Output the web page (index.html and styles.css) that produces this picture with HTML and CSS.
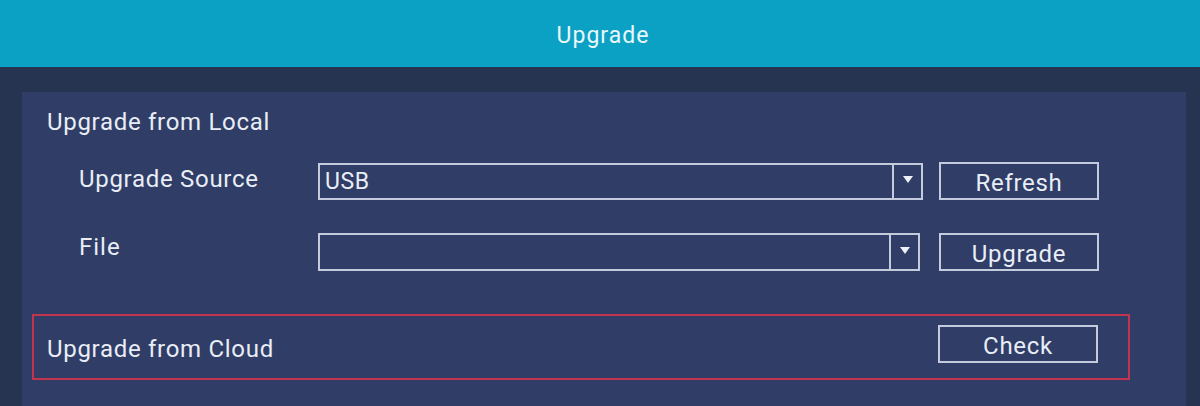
FILE: index.html
```html
<!DOCTYPE html>
<html>
<head>
<meta charset="utf-8">
<link rel="stylesheet" href="styles.css">
</head>
<body>
<div class="header">Upgrade</div>
<div class="panel">
  <div class="section-title">Upgrade from Local</div>
  <div class="row row-source">
    <div class="label">Upgrade Source</div>
    <div class="select sel1">
      <div class="select-value">USB</div>
      <div class="select-arrow"><span class="tri"></span></div>
    </div>
    <div class="btn">Refresh</div>
  </div>
  <div class="row row-file">
    <div class="label label-file">File</div>
    <div class="select sel2">
      <div class="select-value"></div>
      <div class="select-arrow"><span class="tri"></span></div>
    </div>
    <div class="btn">Upgrade</div>
  </div>
  <div class="cloud">
    <div class="cloud-title">Upgrade from Cloud</div>
    <div class="btn btn-check">Check</div>
  </div>
</div>
</body>
</html>
```
FILE: styles.css
```css
html, body {
  margin: 0;
  padding: 0;
}
body {
  width: 1200px;
  height: 406px;
  overflow: hidden;
  background: #263451;
  font-family: Roboto, "Liberation Sans", sans-serif;
  font-size: 24px;
  letter-spacing: 0.7px;
  color: #e9edf5;
}
.header {
  height: 67px;
  background: #0aa1c5;
  display: flex;
  align-items: center;
  justify-content: center;
  color: #eaf7fb;
  padding: 4px 0 0 6px;
  box-sizing: border-box;
  font-size: 23px;
  letter-spacing: 1px;
}
.panel {
  margin: 25px 14px 0 22px;
  height: 314px;
  background: #2f3d67;
  display: flex;
  flex-direction: column;
}
.section-title {
  margin-top: 16px;
  padding-left: 25px;
  line-height: 28px;
}
.row {
  display: flex;
  align-items: center;
  padding-left: 57px;
}
.row-source {
  margin-top: 26px;
}
.row-file {
  margin-top: 33px;
}
.label {
  width: 239px;
  margin-top: -5px;
}
.label-file {
  margin-top: -11px;
  letter-spacing: 1px;
}
.select {
  height: 37px;
  box-sizing: border-box;
  border: 2px solid #c3cbdc;
  display: flex;
}
.sel1 { width: 605px; }
.sel2 { width: 602px; height: 38px; }
.select-value {
  flex: 1;
  padding-left: 5px;
  display: flex;
  align-items: center;
  font-size: 23px;
  letter-spacing: 0.6px;
}
.select-arrow {
  width: 27px;
  border-left: 2px solid #c3cbdc;
  display: flex;
  align-items: center;
  justify-content: center;
}
.tri {
  width: 0;
  height: 0;
  border-left: 5px solid transparent;
  border-right: 5px solid transparent;
  border-top: 7px solid #eef1f7;
  margin-top: -4px;
}
.btn {
  width: 160px;
  height: 38px;
  box-sizing: border-box;
  border: 2px solid #c3cbdc;
  display: flex;
  align-items: center;
  justify-content: center;
  padding-top: 3px;
}
.sel1 + .btn { margin-left: 16px; }
.sel2 + .btn { margin-left: 19px; }
.cloud {
  margin: 43px 0 0 10px;
  width: 1098px;
  height: 66px;
  box-sizing: border-box;
  border: 2px solid #c3344f;
  display: flex;
  align-items: center;
  justify-content: space-between;
  padding: 0 30px 0 13px;
}
.cloud-title {
  margin-top: 4px;
}
.btn-check {
  margin-top: -6px;
}
```
